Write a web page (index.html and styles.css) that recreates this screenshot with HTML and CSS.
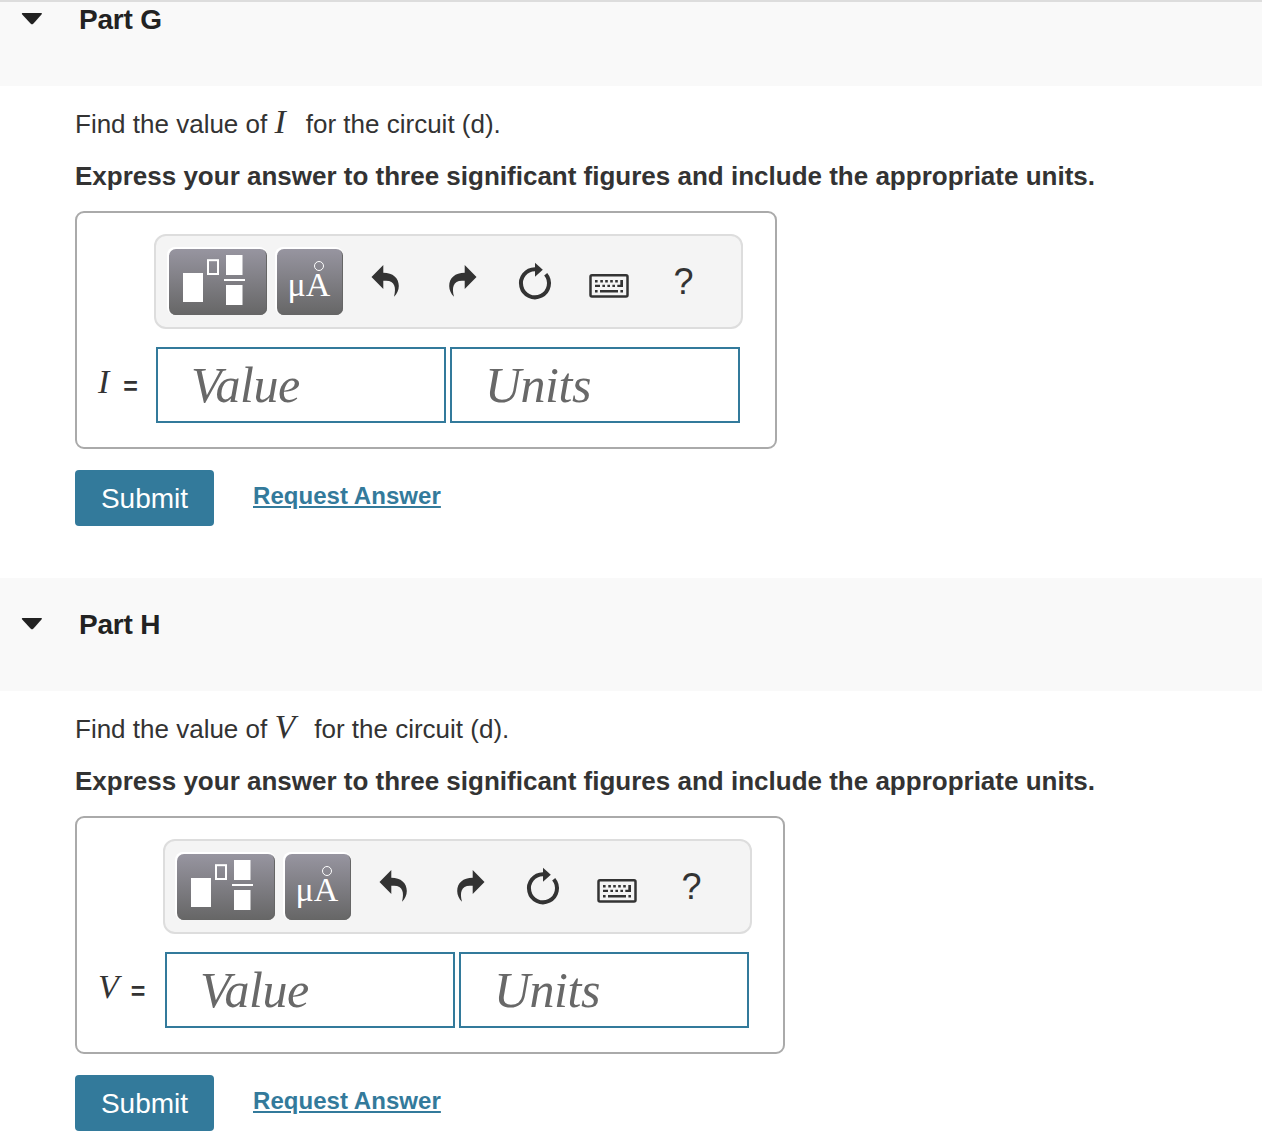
FILE: index.html
```
<!DOCTYPE html>
<html lang="en">
<head>
    <meta charset="UTF-8">
    <meta name="viewport" content="width=device-width, initial-scale=1.0">
    <title>Circuit (d)</title>
    <link rel="stylesheet" href="styles.css">
</head>
<body>

    <!-- shared toolbar icons -->
    <svg class="sprite" width="0" height="0">
        <symbol id="templates" viewBox="0 0 98 66">
            <path d="M14 24h20v29H14zM57 6h16.5v20H57zM55 30h21v2H55zM57 36h16.5v20H57z" fill="#fff"/>
            <rect x="39" y="11.2" width="10" height="13.8" fill="none" stroke="#fff" stroke-width="2"/>
        </symbol>
        <symbol id="undo" viewBox="0 0 74 67">
            <path d="M22.5 29L34.3 17V24.7C44 24.7 49.8 30 49.8 38C49.8 42 48 46 45 48.7C47.3 40 46 32.8 37 32.8H34.3V41Z"/>
        </symbol>
        <symbol id="redo" viewBox="0 0 74 67">
            <path d="M53.5 29L41.7 17V24.7C32 24.7 26.2 30 26.2 38C26.2 42 28 46 31 48.7C28.7 40 30 32.8 39 32.8H41.7V41Z"/>
        </symbol>
        <symbol id="reset" viewBox="0 0 74 67">
            <path d="M48.7 26.3A14 14 0 1 1 38 21.3" fill="none" stroke="#333" stroke-width="4"/>
            <path d="M38 14.7L45.8 21.7L38 28.7Z"/>
        </symbol>
        <symbol id="keyboard" viewBox="0 0 74 67">
            <rect x="19.5" y="27.2" width="37" height="21.4" rx="1.5" fill="none" stroke="#333" stroke-width="2.5"/>
            <path d="M24 32h2.6v2.4H24zM29.3 32h2.6v2.4h-2.6zM34.2 32h2.6v2.4h-2.6zM39.2 32h2.6v2.4h-2.6zM44.2 32h2.6v2.4h-2.6zM24 36.7h5v2.4h-5zM31.4 36.7H34v2.4h-2.6zM36.4 36.7H39v2.4h-2.6zM41.4 36.7H44v2.4h-2.6zM46.3 36.7h3V32H52v7.1h-5.7zM24 42h2.6v2.4H24zM29 42h18v2.4H29zM49.4 42H52v2.4h-2.6z"/>
        </symbol>
    </svg>

    <section class="part part-g">
        <header class="part-header">
            <svg class="arrow" viewBox="0 0 22 12"><path d="M1.5 0H20.2Q21.5 0.3 20.5 1.5L12.5 10.6Q11 12.2 9.5 10.6L1.2 1.5Q0.3 0.3 1.5 0Z"/></svg>
            <h2>Part G</h2>
        </header>
        <div class="part-body">
            <p class="question">Find the value of <i>I</i><span class="rest">for the circuit (d).</span></p>
            <p class="instructions">Express your answer to three significant figures and include the appropriate units.</p>
            <div class="answer">
                <div class="toolbar">
                    <button class="tile wide"><svg><use href="#templates"/></svg></button>
                    <button class="tile units"><span>μ</span><span class="angstrom">A</span></button>
                    <button class="tool first"><svg><use href="#undo"/></svg></button>
                    <button class="tool"><svg><use href="#redo"/></svg></button>
                    <button class="tool"><svg><use href="#reset"/></svg></button>
                    <button class="tool"><svg><use href="#keyboard"/></svg></button>
                    <button class="tool help">?</button>
                </div>
                <div class="fields">
                    <div class="label"><i>I</i><span>=</span></div>
                    <div class="field">Value</div>
                    <div class="field unit-field">Units</div>
                </div>
            </div>
            <div class="actions">
                <button class="submit">Submit</button>
                <a class="request" href="#">Request Answer</a>
            </div>
        </div>
    </section>

    <section class="part part-h">
        <header class="part-header">
            <svg class="arrow" viewBox="0 0 22 12"><path d="M1.5 0H20.2Q21.5 0.3 20.5 1.5L12.5 10.6Q11 12.2 9.5 10.6L1.2 1.5Q0.3 0.3 1.5 0Z"/></svg>
            <h2>Part H</h2>
        </header>
        <div class="part-body">
            <p class="question">Find the value of <i>V</i><span class="rest">for the circuit (d).</span></p>
            <p class="instructions">Express your answer to three significant figures and include the appropriate units.</p>
            <div class="answer">
                <div class="toolbar">
                    <button class="tile wide"><svg><use href="#templates"/></svg></button>
                    <button class="tile units"><span>μ</span><span class="angstrom">A</span></button>
                    <button class="tool first"><svg><use href="#undo"/></svg></button>
                    <button class="tool"><svg><use href="#redo"/></svg></button>
                    <button class="tool"><svg><use href="#reset"/></svg></button>
                    <button class="tool"><svg><use href="#keyboard"/></svg></button>
                    <button class="tool help">?</button>
                </div>
                <div class="fields">
                    <div class="label"><i>V</i><span>=</span></div>
                    <div class="field">Value</div>
                    <div class="field unit-field">Units</div>
                </div>
            </div>
            <div class="actions">
                <button class="submit">Submit</button>
                <a class="request" href="#">Request Answer</a>
            </div>
        </div>
    </section>

</body>
</html>
```
FILE: styles.css
```
* {
    box-sizing: border-box;
}
body {
    margin: 0;
    background-color: #fff;
    color: #333;
    font-family: "Liberation Sans", Arial, sans-serif;
    font-size: 26px;
}
button {
    padding: 0;
    border: none;
    background: none;
    font-family: inherit;
    color: inherit;
    cursor: pointer;
}
i {
    font-family: "Liberation Serif", "Times New Roman", serif;
    font-size: 34px;
    line-height: 30px;
}
.sprite {
    display: block;
    height: 0;
}
.part-header {
    display: flex;
    align-items: flex-start;
    height: 113px;
    padding: 31px 21px;
    background-color: #f9f9f9;
    color: #222;
}
.part-g .part-header {
    height: 86px;
    padding-top: 2px;
    border-top: 2px solid #ddd;
}
.arrow {
    width: 22px;
    height: 12px;
    margin-top: 9px;
    fill: #222;
}
.part-header h2 {
    margin: 0 0 0 36px;
    font-size: 28px;
    line-height: 32px;
    letter-spacing: -0.2px;
}
.part-body {
    height: 492px;
    padding: 21px 75px 0;
}
.part-h .part-body {
    height: 455px;
}
.question, .instructions {
    margin: 0;
    height: 30px;
    line-height: 30px;
    white-space: nowrap;
}
.instructions {
    margin-top: 24px;
    font-weight: bold;
}
.rest {
    margin-left: 20px;
}
.part-h .rest {
    margin-left: 19px;
}
.answer {
    width: 702px;
    height: 238px;
    margin-top: 20px;
    padding: 21px 0 0 20px;
    border: 2px solid #aaa;
    border-radius: 9px;
}
.part-h .answer {
    width: 710px;
}
.toolbar {
    display: flex;
    width: 589px;
    height: 95px;
    margin-left: 57px;
    padding: 13px;
    border: 2px solid #ddd;
    border-radius: 12px;
    background-color: #f4f4f4;
}
.part-h .toolbar {
    margin-left: 66px;
    padding-left: 12px;
}
.tile {
    height: 66px;
    margin-right: 10px;
    border-radius: 7px;
    background: linear-gradient(#9795a0, #666);
    box-shadow: -1px -1px 0 1px #fff, inset -1px -1px 0 #666;
    color: #fff;
}
.wide {
    width: 98px;
}
.wide svg {
    display: block;
    width: 98px;
    height: 66px;
}
.units {
    display: flex;
    justify-content: center;
    width: 66px;
    margin-right: 6px;
    padding: 16px 2px 0 0;
    font-family: "Liberation Serif", serif;
    font-size: 34px;
    line-height: 40px;
}
.angstrom {
    position: relative;
}
/* ring over the A */
.angstrom::before {
    content: "";
    position: absolute;
    top: -4px;
    left: 8px;
    width: 8px;
    height: 8px;
    border: 1.5px solid #fff;
    border-radius: 50%;
}
.tool {
    width: 74px;
    height: 67px;
    margin-top: -1px;
}
.tool svg {
    display: block;
    width: 74px;
    height: 67px;
    fill: #333;
}
.help {
    padding-left: 3px;
    font-size: 36px;
}
.fields {
    display: flex;
    gap: 4px;
    margin-top: 18px;
}
.label {
    display: flex;
    align-items: baseline;
    gap: 14px;
    width: 55px;
    padding: 20px 0 0 1px;
}
.part-h .label {
    gap: 12px;
    width: 64px;
}
.label span {
    position: relative;
    top: 2px;
    font-size: 25px;
    font-weight: bold;
}
.field {
    width: 290px;
    height: 76px;
    padding-left: 33px;
    border: 2px solid #337a9b;
    color: #686868;
    font-family: "Liberation Serif", serif;
    font-size: 50px;
    font-style: italic;
    letter-spacing: -0.5px;
    line-height: 73px;
}
.actions {
    display: flex;
    margin-top: 21px;
}
.submit {
    width: 139px;
    height: 56px;
    padding-top: 1px;
    border-radius: 4px;
    background-color: #337a9b;
    color: #fff;
    font-size: 28px;
}
.request {
    margin: 12px 0 0 39px;
    color: #337a9b;
    font-size: 24px;
    font-weight: bold;
    line-height: 28px;
    letter-spacing: 0.05px;
    text-underline-offset: 2px;
    text-decoration-thickness: 2px;
}
```
